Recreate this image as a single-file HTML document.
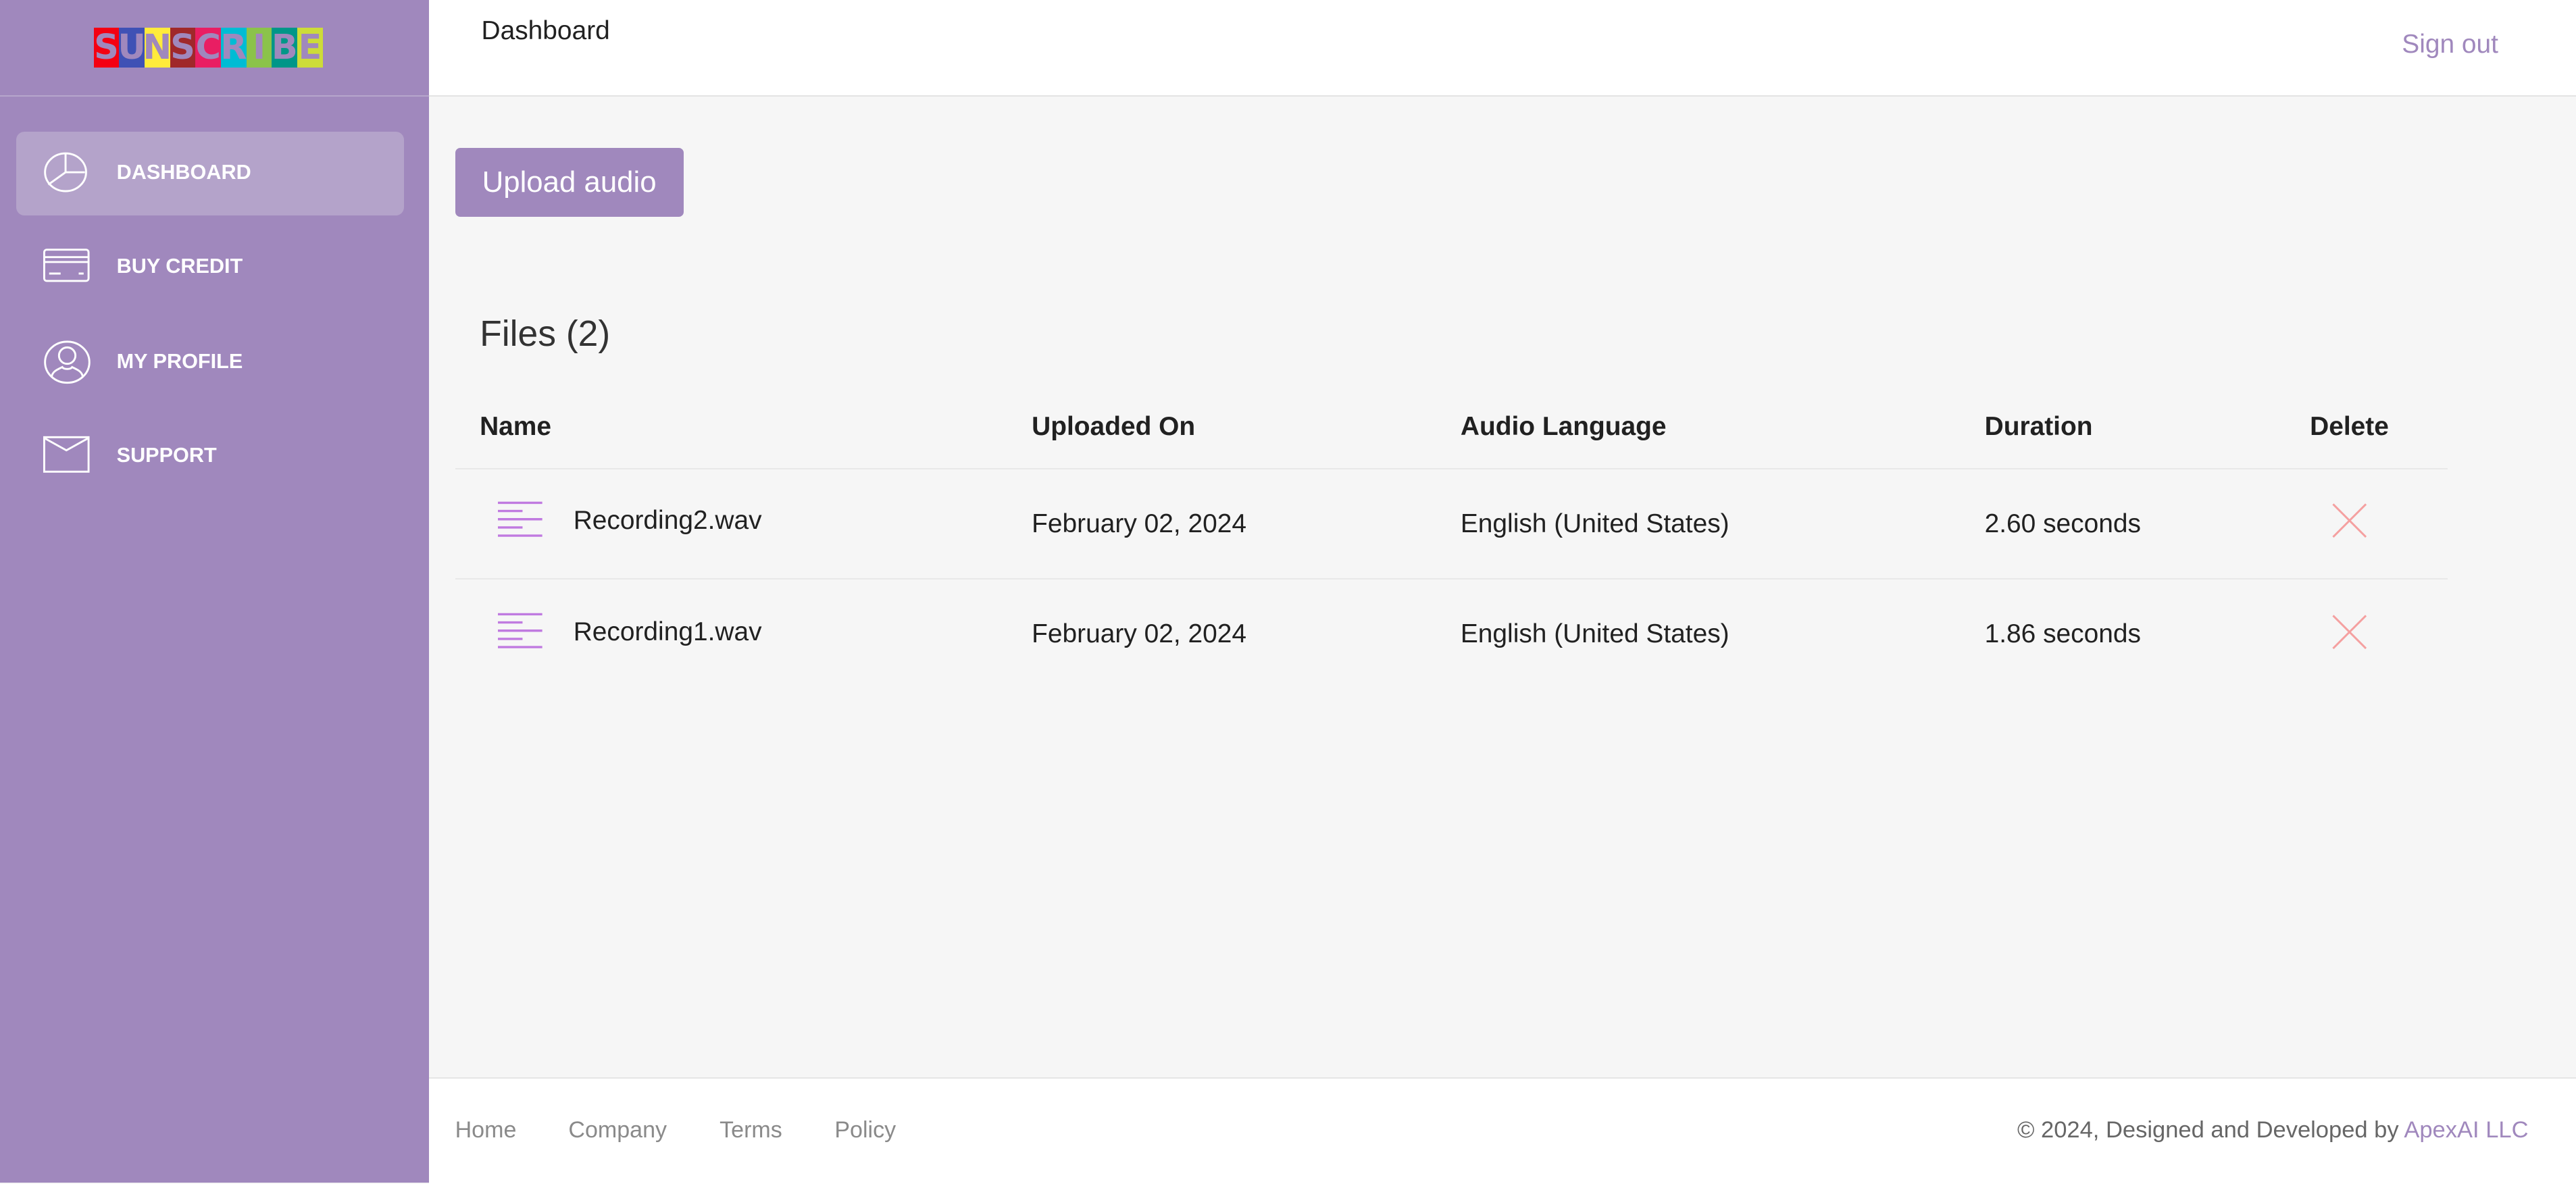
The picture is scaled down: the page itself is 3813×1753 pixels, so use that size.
<!DOCTYPE html>
<html><head><meta charset="utf-8"><style>
html{zoom:2.4318}
body{margin:0;width:1568px;height:720px;position:relative;overflow:hidden;background:#f6f6f6;font-family:"Liberation Sans",Arial,sans-serif;color:#212121}
.sb{position:absolute;left:0;top:0;width:261px;height:720px;background:#a088bd}
.sep{position:absolute;left:0;top:58px;width:261px;height:1px;background:#b6a6cc}
.logo{position:absolute;left:57px;top:17px;display:flex}
.logo span{width:15.5px;height:24px;display:flex;align-items:center;justify-content:center;font-weight:bold;font-size:21px;color:#a088bd;font-family:"DejaVu Sans",sans-serif}
.item{position:absolute;left:10px;width:236px;height:51px}
.item.act{background:#b4a3ca;border-radius:5px}
.item svg{position:absolute;left:16px;top:11px}
.item b{position:absolute;left:61px;top:18px;font-size:12.6px;color:#fff}
.hd{position:absolute;left:261px;top:0;right:0;height:58px;background:#fff;border-bottom:1px solid #e3e3e3}
.abs{position:absolute;white-space:nowrap}
.btn{position:absolute;left:277px;top:90px;width:139px;height:42px;background:#a088bd;border-radius:3px;color:#fff;font-size:18px;line-height:42px;text-align:center}
.th{font-weight:bold;font-size:16px;top:251px}
.td{font-size:16px}
.line{position:absolute;left:277px;width:1213px;height:1px;background:#e8e8e8}
.ft{position:absolute;left:261px;top:656px;right:0;height:64px;background:#fff;border-top:1px solid #e6e6e6}
.fl{font-size:14px;color:#8a8a8a;top:680px}
</style></head><body>
<div class="sb">
<div class="logo"><span style="background:#f40012">S</span><span style="background:#3f51b5">U</span><span style="background:#ffeb3b">N</span><span style="background:#a0282a">S</span><span style="background:#e91e63">C</span><span style="background:#00bcd4">R</span><span style="background:#8bc34a">I</span><span style="background:#009688">B</span><span style="background:#cddc39">E</span></div>
<div class="sep"></div>
<div class="item act" style="top:80px"><svg width="28" height="28" viewBox="0 0 28 28" fill="none" stroke="#fff" stroke-width="1.2"><ellipse cx="14" cy="14" rx="12.5" ry="11.5"/><path d="M14 2.5V14H25.8M14 14L3.5 21.5"/></svg><b>DASHBOARD</b></div>
<div class="item" style="top:137px"><svg width="30" height="28" viewBox="0 0 30 28" fill="none" stroke="#fff" stroke-width="1.2"><rect x="1" y="4" width="27" height="19" rx="1.5"/><path d="M1 8.5H28M1 11.5H28M4 18.5H11M22 18.5H25"/></svg><b>BUY CREDIT</b></div>
<div class="item" style="top:195px"><svg width="30" height="30" viewBox="0 0 30 30" fill="none" stroke="#fff" stroke-width="1.2"><ellipse cx="15" cy="14.5" rx="13.5" ry="12.5"/><circle cx="15" cy="10.5" r="5"/><path d="M5.5 23.5C6 20 9 19 12 17.5 13 19 17 19 18 17.5 21 19 24 20 24.5 23.5"/></svg><b>MY PROFILE</b></div>
<div class="item" style="top:252px"><svg width="30" height="28" viewBox="0 0 30 28" fill="none" stroke="#fff" stroke-width="1.2"><rect x="1" y="3" width="27" height="21"/><path d="M1 3.5L14.5 11 28 3.5"/></svg><b>SUPPORT</b></div>
</div>
<div class="hd"></div>
<div class="abs" style="left:293px;top:10px;font-size:16px">Dashboard</div>
<div class="abs" style="left:1462px;top:18px;font-size:16px;color:#a088bd">Sign out</div>
<div class="btn">Upload audio</div>
<div class="abs" style="left:292px;top:191px;font-size:22px;color:#333">Files (2)</div>
<div class="abs th" style="left:292px">Name</div>
<div class="abs th" style="left:628px">Uploaded On</div>
<div class="abs th" style="left:889px">Audio Language</div>
<div class="abs th" style="left:1208px">Duration</div>
<div class="abs th" style="left:1406px">Delete</div>
<div class="line" style="top:285px"></div>
<div class="line" style="top:352px"></div>
<svg class="abs" style="left:303px;top:305px" width="28" height="24" viewBox="0 0 28 24" stroke="#c07ae0" stroke-width="1.4"><path d="M0 1H27M0 6H15M0 11H27M0 16H15M0 21H27"/></svg>
<svg class="abs" style="left:303px;top:373px" width="28" height="24" viewBox="0 0 28 24" stroke="#c07ae0" stroke-width="1.4"><path d="M0 1H27M0 6H15M0 11H27M0 16H15M0 21H27"/></svg>
<div class="abs td" style="left:349px;top:308px">Recording2.wav</div>
<div class="abs td" style="left:628px;top:310px">February 02, 2024</div>
<div class="abs td" style="left:889px;top:310px">English (United States)</div>
<div class="abs td" style="left:1208px;top:310px">2.60 seconds</div>
<div class="abs td" style="left:349px;top:376px">Recording1.wav</div>
<div class="abs td" style="left:628px;top:377px">February 02, 2024</div>
<div class="abs td" style="left:889px;top:377px">English (United States)</div>
<div class="abs td" style="left:1208px;top:377px">1.86 seconds</div>
<svg class="abs" style="left:1419px;top:306px" width="22" height="22" viewBox="0 0 22 22" stroke="#f5a0a0" stroke-width="1.2"><path d="M1 1L21 21M21 1L1 21"/></svg>
<svg class="abs" style="left:1419px;top:374px" width="22" height="22" viewBox="0 0 22 22" stroke="#f5a0a0" stroke-width="1.2"><path d="M1 1L21 21M21 1L1 21"/></svg>
<div class="ft"></div>
<div class="abs fl" style="left:277px">Home</div>
<div class="abs fl" style="left:346px">Company</div>
<div class="abs fl" style="left:438px">Terms</div>
<div class="abs fl" style="left:508px">Policy</div>
<div class="abs fl" style="right:29px;color:#666;font-size:14.2px">© 2024, Designed and Developed by <span style="color:#a088bd">ApexAI LLC</span></div>
</body></html>
